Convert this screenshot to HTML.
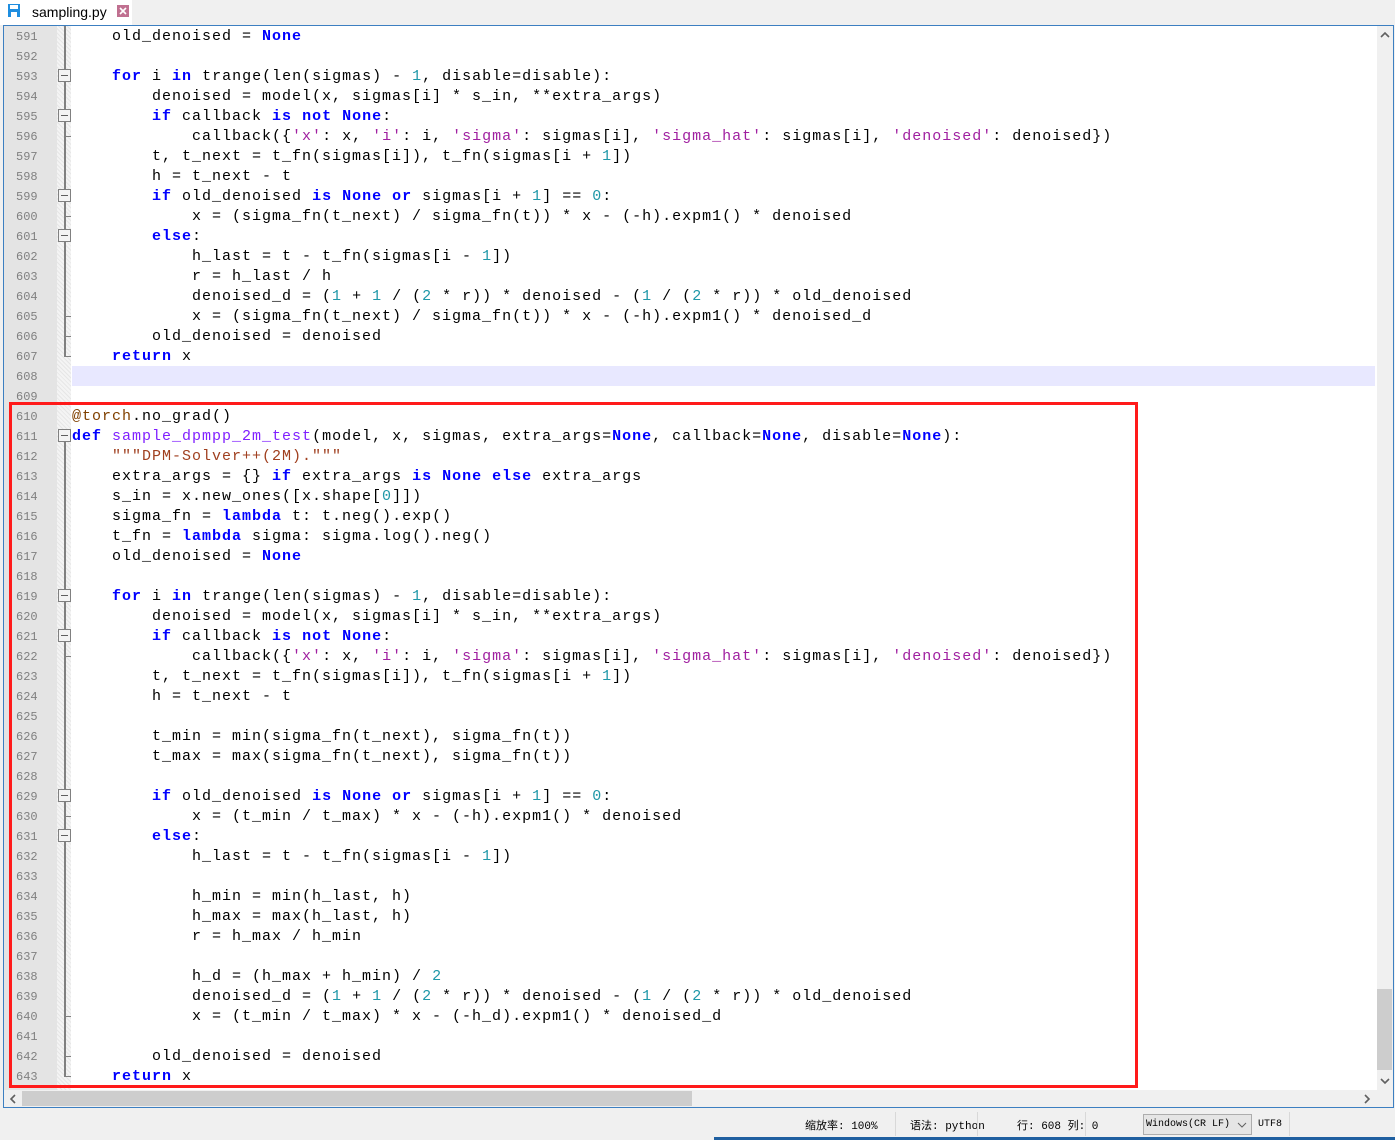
<!DOCTYPE html>
<html><head><meta charset="utf-8"><style>
*{margin:0;padding:0;box-sizing:border-box}
body{width:1395px;height:1140px;background:#f0f0f0;position:relative;overflow:hidden;font-family:"Liberation Sans",sans-serif}
.tab{position:absolute;left:0;top:0;width:132px;height:25px;background:#fff}
.tab span{position:absolute;left:32px;top:4px;font-size:14px;color:#000}
.ed{position:absolute;left:3px;top:25px;width:1391px;height:1083px;border:1px solid #3c7fc1;background:#fff;overflow:hidden}
.gut{position:absolute;left:4px;top:26px;width:53px;height:1064px;background:#e4e4e4}
.fold{position:absolute;left:57px;top:26px;width:14px;height:1064px;background-color:#f4f4f4;background-image:repeating-linear-gradient(45deg,#e6e6e6 0 1px,transparent 1px 3px)}
.cur{position:absolute;left:72px;top:366px;width:1303px;height:20px;background:#e8e8ff}
.nums{position:absolute;left:16px;top:27px;font-family:"Liberation Mono",monospace;font-size:12px;color:#808080;line-height:20px;white-space:pre}
.code{position:absolute;left:72px;top:27px;font-family:"Liberation Mono",monospace;font-size:15px;letter-spacing:1px;line-height:20px;white-space:pre;color:#000}
.k{color:#0000ff;font-weight:bold}
.n{color:#2098a8}
.s{color:#a020a0}
.d{color:#a04020}
.f{color:#8020ff}
.dec{color:#804000}
.vl{position:absolute;left:64px;width:2px;background:#808080}
.tk{position:absolute;left:64px;width:7px;height:1px;background:#808080}
.bx{position:absolute;left:58px;width:13px;height:13px;border:1px solid #808080;background:#f4f4f4}
.bx:after{content:"";position:absolute;left:2px;top:5px;width:7px;height:1px;background:#606060}
.red{position:absolute;left:9px;top:402px;width:1129px;height:686px;border:3px solid #ff1a1a}
.vs{position:absolute;left:1377px;top:26px;width:16px;height:1064px;background:#f0f0f0}
.vt{position:absolute;left:1377px;top:989px;width:15px;height:81px;background:#cdcdcd}
.hs{position:absolute;left:4px;top:1090px;width:1389px;height:17px;background:#f0f0f0}
.ht{position:absolute;left:22px;top:1091px;width:670px;height:15px;background:#cdcdcd}
.st{position:absolute;top:1117px;font-size:11px;font-family:"Liberation Mono","Noto Sans CJK SC",monospace;color:#000}
.sep{position:absolute;top:1112px;width:1px;height:24px;background:#d8d8d8}
</style></head><body>
<div class="tab"><svg style="position:absolute;left:8px;top:4px" width="12" height="13"><rect x="0" y="0" width="12" height="13" fill="#1f8ee0"/><rect x="2" y="1" width="8" height="4" fill="#fff"/><rect x="3" y="8" width="6" height="5" fill="#fff"/></svg><span>sampling.py</span><svg style="position:absolute;left:117px;top:5px" width="12" height="12"><rect width="12" height="12" fill="#c07090"/><path d="M3 3L9 9M9 3L3 9" stroke="#fff" stroke-width="1.6"/></svg></div>
<div class="ed"></div>
<div class="gut"></div>
<div class="fold"></div>
<div class="cur"></div>
<div class="vl" style="top:26px;height:330px"></div>
<div class="tk" style="top:136px"></div><div class="tk" style="top:216px"></div><div class="tk" style="top:316px"></div><div class="tk" style="top:336px"></div><div class="tk" style="top:356px"></div>
<div class="vl" style="top:436px;height:640px"></div>
<div class="tk" style="top:656px"></div><div class="tk" style="top:816px"></div><div class="tk" style="top:1016px"></div><div class="tk" style="top:1056px"></div><div class="tk" style="top:1076px"></div>
<div class="bx" style="top:69px"></div><div class="bx" style="top:109px"></div><div class="bx" style="top:189px"></div><div class="bx" style="top:229px"></div>
<div class="bx" style="top:429px"></div><div class="bx" style="top:589px"></div><div class="bx" style="top:629px"></div><div class="bx" style="top:789px"></div><div class="bx" style="top:829px"></div>
<div class="nums">591
592
593
594
595
596
597
598
599
600
601
602
603
604
605
606
607
608
609
610
611
612
613
614
615
616
617
618
619
620
621
622
623
624
625
626
627
628
629
630
631
632
633
634
635
636
637
638
639
640
641
642
643</div>
<div class="code">    old_denoised = <span class="k">None</span>

    <span class="k">for</span> i <span class="k">in</span> trange(len(sigmas) - <span class="n">1</span>, disable=disable):
        denoised = model(x, sigmas[i] * s_in, **extra_args)
        <span class="k">if</span> callback <span class="k">is</span> <span class="k">not</span> <span class="k">None</span>:
            callback({<span class="s">'x'</span>: x, <span class="s">'i'</span>: i, <span class="s">'sigma'</span>: sigmas[i], <span class="s">'sigma_hat'</span>: sigmas[i], <span class="s">'denoised'</span>: denoised})
        t, t_next = t_fn(sigmas[i]), t_fn(sigmas[i + <span class="n">1</span>])
        h = t_next - t
        <span class="k">if</span> old_denoised <span class="k">is</span> <span class="k">None</span> <span class="k">or</span> sigmas[i + <span class="n">1</span>] == <span class="n">0</span>:
            x = (sigma_fn(t_next) / sigma_fn(t)) * x - (-h).expm1() * denoised
        <span class="k">else</span>:
            h_last = t - t_fn(sigmas[i - <span class="n">1</span>])
            r = h_last / h
            denoised_d = (<span class="n">1</span> + <span class="n">1</span> / (<span class="n">2</span> * r)) * denoised - (<span class="n">1</span> / (<span class="n">2</span> * r)) * old_denoised
            x = (sigma_fn(t_next) / sigma_fn(t)) * x - (-h).expm1() * denoised_d
        old_denoised = denoised
    <span class="k">return</span> x


<span class="dec">@torch</span>.no_grad()
<span class="k">def</span> <span class="f">sample_dpmpp_2m_test</span>(model, x, sigmas, extra_args=<span class="k">None</span>, callback=<span class="k">None</span>, disable=<span class="k">None</span>):
    <span class="d">"""DPM-Solver++(2M)."""</span>
    extra_args = {} <span class="k">if</span> extra_args <span class="k">is</span> <span class="k">None</span> <span class="k">else</span> extra_args
    s_in = x.new_ones([x.shape[<span class="n">0</span>]])
    sigma_fn = <span class="k">lambda</span> t: t.neg().exp()
    t_fn = <span class="k">lambda</span> sigma: sigma.log().neg()
    old_denoised = <span class="k">None</span>

    <span class="k">for</span> i <span class="k">in</span> trange(len(sigmas) - <span class="n">1</span>, disable=disable):
        denoised = model(x, sigmas[i] * s_in, **extra_args)
        <span class="k">if</span> callback <span class="k">is</span> <span class="k">not</span> <span class="k">None</span>:
            callback({<span class="s">'x'</span>: x, <span class="s">'i'</span>: i, <span class="s">'sigma'</span>: sigmas[i], <span class="s">'sigma_hat'</span>: sigmas[i], <span class="s">'denoised'</span>: denoised})
        t, t_next = t_fn(sigmas[i]), t_fn(sigmas[i + <span class="n">1</span>])
        h = t_next - t

        t_min = min(sigma_fn(t_next), sigma_fn(t))
        t_max = max(sigma_fn(t_next), sigma_fn(t))

        <span class="k">if</span> old_denoised <span class="k">is</span> <span class="k">None</span> <span class="k">or</span> sigmas[i + <span class="n">1</span>] == <span class="n">0</span>:
            x = (t_min / t_max) * x - (-h).expm1() * denoised
        <span class="k">else</span>:
            h_last = t - t_fn(sigmas[i - <span class="n">1</span>])

            h_min = min(h_last, h)
            h_max = max(h_last, h)
            r = h_max / h_min

            h_d = (h_max + h_min) / <span class="n">2</span>
            denoised_d = (<span class="n">1</span> + <span class="n">1</span> / (<span class="n">2</span> * r)) * denoised - (<span class="n">1</span> / (<span class="n">2</span> * r)) * old_denoised
            x = (t_min / t_max) * x - (-h_d).expm1() * denoised_d

        old_denoised = denoised
    <span class="k">return</span> x</div>
<div class="red"></div>
<div class="vs"></div><div class="vt"></div>
<svg style="position:absolute;left:1379px;top:30px" width="12" height="10"><path d="M2 7L6 3L10 7" stroke="#606060" stroke-width="1.6" fill="none"/></svg>
<svg style="position:absolute;left:1379px;top:1076px" width="12" height="10"><path d="M2 3L6 7L10 3" stroke="#606060" stroke-width="1.6" fill="none"/></svg>
<div class="hs"></div><div class="ht"></div>
<svg style="position:absolute;left:8px;top:1093px" width="10" height="12"><path d="M7 2L3 6L7 10" stroke="#606060" stroke-width="1.6" fill="none"/></svg>
<svg style="position:absolute;left:1362px;top:1093px" width="10" height="12"><path d="M3 2L7 6L3 10" stroke="#606060" stroke-width="1.6" fill="none"/></svg>
<div class="st" style="left:805px">缩放率: 100%</div>
<div class="sep" style="left:895px"></div>
<div class="st" style="left:910px">语法: python</div>
<div class="sep" style="left:977px"></div>
<div class="st" style="left:1017px">行: 608 列: 0</div>
<div class="sep" style="left:1085px"></div>
<div style="position:absolute;left:1143px;top:1114px;width:109px;height:21px;border:1px solid #adadad;background:#e5e5e5"></div>
<div class="st" style="left:1146px;font-size:10px;top:1119px">Windows(CR LF)</div>
<svg style="position:absolute;left:1237px;top:1121px" width="10" height="8"><path d="M1 2L5 6L9 2" stroke="#606060" fill="none"/></svg>
<div class="st" style="left:1258px;font-size:10px;top:1119px">UTF8</div>
<div class="sep" style="left:1289px"></div>
<div style="position:absolute;left:714px;top:1137px;width:681px;height:3px;background:#1f5fa0"></div>
</body></html>
